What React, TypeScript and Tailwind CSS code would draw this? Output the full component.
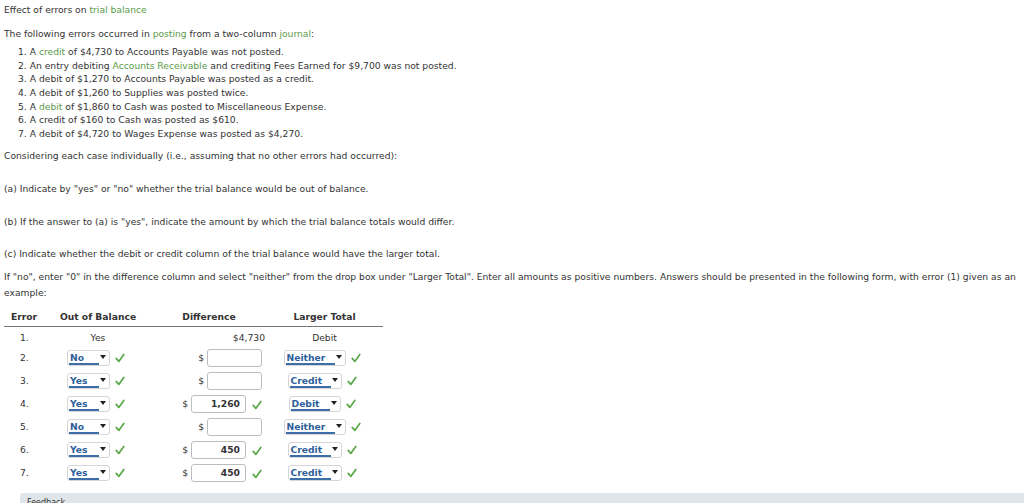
import React from 'react'

const green = 'text-[#5b9b4a]'

function Check() {
  return (
    <svg width="10" height="10" viewBox="0 0 10 10" className="inline-block shrink-0">
      <path d="M1.2 5.4 L3.8 8.4 L8.8 1.4" fill="none" stroke="#5aa847" strokeWidth="1.7" strokeLinecap="round" strokeLinejoin="round" />
    </svg>
  )
}

function Dropdown({ value, w }: { value: string; w: string }) {
  return (
    <span className={`inline-flex items-center justify-between h-[16px] ${w} border border-[#d6d6d6] rounded-[3px] bg-white px-[1px]`}>
      <span className="font-bold text-[#2f5f9c] border-b-2 border-[#3d6ea8] leading-[11px] flex-1 text-left pl-[1px]">{value}</span>
      <svg width="6" height="4" viewBox="0 0 6 4" className="ml-[1px] mr-[2px] -mt-[2px]">
        <path d="M0 0 L6 0 L3 4 Z" fill="#222" />
      </svg>
    </span>
  )
}

function Amount({ value, check }: { value?: string; check?: boolean }) {
  return (
    <span className="inline-flex items-center gap-[3px]">
      <span>$</span>
      <span className="inline-flex items-center justify-end w-[55px] h-[18px] border border-[#bdbdbd] rounded-[3px] bg-white px-[5px] font-bold">{value}</span>
      {check && <span className="ml-[3px]"><Check /></span>}
    </span>
  )
}

const rows = [
  { n: '2.', oob: 'No', amt: '', lt: 'Neither' },
  { n: '3.', oob: 'Yes', amt: '', lt: 'Credit' },
  { n: '4.', oob: 'Yes', amt: '1,260', lt: 'Debit' },
  { n: '5.', oob: 'No', amt: '', lt: 'Neither' },
  { n: '6.', oob: 'Yes', amt: '450', lt: 'Credit' },
  { n: '7.', oob: 'Yes', amt: '450', lt: 'Credit' },
]

const ltWidth: Record<string, string> = {
  Neither: 'w-[62px]',
  Credit: 'w-[54px]',
  Debit: 'w-[52px]',
}

export default function App() {
  return (
    <div className="w-[1024px] h-[503px] overflow-hidden bg-white text-[#333] text-[9.2px] leading-[13.6px]" style={{ fontFamily: '"DejaVu Sans", Verdana, sans-serif' }}>
      <div className="pl-[4px] pt-[3px]">
        <p>Effect of errors on <span className={green}>trial balance</span></p>
        <p className="mt-[10px]">The following errors occurred in <span className={green}>posting</span> from a two-column <span className={green}>journal</span>:</p>
        <ol className="mt-[5px] pl-[14px]">
          <li>1. A <span className={green}>credit</span> of $4,730 to Accounts Payable was not posted.</li>
          <li>2. An entry debiting <span className={green}>Accounts Receivable</span> and crediting Fees Earned for $9,700 was not posted.</li>
          <li>3. A debit of $1,270 to Accounts Payable was posted as a credit.</li>
          <li>4. A debit of $1,260 to Supplies was posted twice.</li>
          <li>5. A <span className={green}>debit</span> of $1,860 to Cash was posted to Miscellaneous Expense.</li>
          <li>6. A credit of $160 to Cash was posted as $610.</li>
          <li>7. A debit of $4,720 to Wages Expense was posted as $4,270.</li>
        </ol>
        <p className="mt-[9px]">Considering each case individually (i.e., assuming that no other errors had occurred):</p>
        <p className="mt-[19px]">(a) Indicate by "yes" or "no" whether the trial balance would be out of balance.</p>
        <p className="mt-[19px]">(b) If the answer to (a) is "yes", indicate the amount by which the trial balance totals would differ.</p>
        <p className="mt-[19px]">(c) Indicate whether the debit or credit column of the trial balance would have the larger total.</p>
        <p className="mt-[8px] leading-[16px] pr-[4px]">If "no", enter "0" in the difference column and select "neither" from the drop box under "Larger Total". Enter all amounts as positive numbers. Answers should be presented in the following form, with error (1) given as an example:</p>

        <table className="mt-[6px] w-[379px] border-collapse table-fixed">
          <colgroup>
            <col className="w-[40px]" />
            <col className="w-[108px]" />
            <col className="w-[114px]" />
            <col className="w-[117px]" />
          </colgroup>
          <thead>
            <tr className="border-b border-[#777] font-bold">
              <th className="h-[20px] text-center">Error</th>
              <th className="text-center">Out of Balance</th>
              <th className="text-center">Difference</th>
              <th className="text-center">Larger Total</th>
            </tr>
          </thead>
          <tbody>
            <tr className="h-[20px]">
              <td className="text-left pl-[16px] pt-[1px]">1.</td>
              <td className="text-center pt-[1px]">Yes</td>
              <td className="text-right pr-[1px] pt-[1px]">$4,730</td>
              <td className="text-center pt-[1px]">Debit</td>
            </tr>
            {rows.map(r => (
              <tr key={r.n} className="h-[23px]">
                <td className="text-left pl-[16px]">{r.n}</td>
                <td className="text-left pl-[23px]">
                  <span className="inline-flex items-center gap-[5px]">
                    <Dropdown value={r.oob} w="w-[43px]" />
                    <Check />
                  </span>
                </td>
                <td className="text-right pr-[4px]">
                  <Amount value={r.amt} check={r.amt !== ''} />
                </td>
                <td className="text-center">
                  <span className="inline-flex items-center gap-[5px] -ml-[5px]">
                    <Dropdown value={r.lt} w={ltWidth[r.lt]} />
                    <Check />
                  </span>
                </td>
              </tr>
            ))}
          </tbody>
        </table>
      </div>
      <div className="ml-[20px] mt-[8px] h-[40px] bg-[#dfe5e8] rounded-tl-[3px] pl-[7px] pt-[3px] text-[8px]">Feedback</div>
    </div>
  )
}
